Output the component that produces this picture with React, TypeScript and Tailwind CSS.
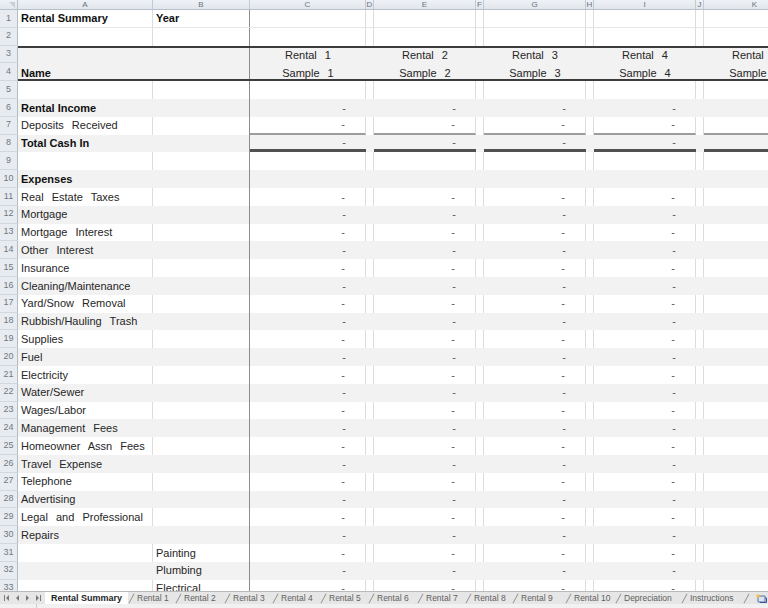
import React from 'react';

const WIDTHS = [
  'w-[135px]',
  'w-[97px]',
  'w-[116px]',
  'w-[8px]',
  'w-[102px]',
  'w-[8px]',
  'w-[102px]',
  'w-[8px]',
  'w-[102px]',
  'w-[8px]',
  'w-[102px]',
];
const LETTERS = ['A', 'B', 'C', 'D', 'E', 'F', 'G', 'H', 'I', 'J', 'K'];
const MONEY = [2, 4, 6, 8, 10];

type Label = { a?: string; b?: string; bold?: boolean };

const LABELS: Record<number, Label> = {
  1: { a: 'Rental Summary', b: 'Year', bold: true },
  4: { a: 'Name', bold: true },
  6: { a: 'Rental Income', bold: true },
  7: { a: 'Deposits Received' },
  8: { a: 'Total Cash In', bold: true },
  10: { a: 'Expenses', bold: true },
  11: { a: 'Real Estate Taxes' },
  12: { a: 'Mortgage' },
  13: { a: 'Mortgage Interest' },
  14: { a: 'Other Interest' },
  15: { a: 'Insurance' },
  16: { a: 'Cleaning/Maintenance' },
  17: { a: 'Yard/Snow Removal' },
  18: { a: 'Rubbish/Hauling Trash' },
  19: { a: 'Supplies' },
  20: { a: 'Fuel' },
  21: { a: 'Electricity' },
  22: { a: 'Water/Sewer' },
  23: { a: 'Wages/Labor' },
  24: { a: 'Management Fees' },
  25: { a: 'Homeowner Assn Fees' },
  26: { a: 'Travel Expense' },
  27: { a: 'Telephone' },
  28: { a: 'Advertising' },
  29: { a: 'Legal and Professional' },
  30: { a: 'Repairs' },
  31: { b: 'Painting' },
  32: { b: 'Plumbing' },
  33: { b: 'Electrical' },
};

const TABS = [
  { name: 'Rental 1', w: 'w-[47px]' },
  { name: 'Rental 2', w: 'w-[49px]' },
  { name: 'Rental 3', w: 'w-[48px]' },
  { name: 'Rental 4', w: 'w-[48px]' },
  { name: 'Rental 5', w: 'w-[48px]' },
  { name: 'Rental 6', w: 'w-[49px]' },
  { name: 'Rental 7', w: 'w-[48px]' },
  { name: 'Rental 8', w: 'w-[47px]' },
  { name: 'Rental 9', w: 'w-[53px]' },
  { name: 'Rental 10', w: 'w-[50px]' },
  { name: 'Depreciation', w: 'w-[66px]' },
  { name: 'Instructions', w: 'w-[62px]' },
];

const isGray = (n: number) => n === 3 || n === 4 || (n >= 6 && n % 2 === 0);
const hasDash = (n: number) => n === 6 || n === 7 || n === 8 || n >= 11;

function Cell({ n, i }: { n: number; i: number }) {
  const gray = isGray(n);
  const label = LABELS[n];
  const money = MONEY.includes(i);

  let border = '';
  if (i === 1) border = 'border-r border-r-[#8c8c8c]';
  else if (!gray) border = 'border-r border-r-[#dcdcdc]';

  let under = '';
  if (money && n === 7) under = 'border-b-2 border-b-[#9c9c9c]';
  if (money && n === 8) under = 'border-b-[3px] border-b-[#505050]';

  let content: React.ReactNode = null;
  let align = 'justify-start pl-[3px]';

  if (i === 0 && label?.a) {
    content = (
      <span className={label.bold ? 'font-bold text-[#111]' : 'text-[#262626] [word-spacing:5px]'}>
        {label.a}
      </span>
    );
  }
  if (i === 1 && label?.b) {
    content = (
      <span className={label.bold ? 'font-bold text-[#111]' : 'text-[#262626] [word-spacing:5px]'}>
        {label.b}
      </span>
    );
  }
  if (money && (n === 3 || n === 4)) {
    const k = MONEY.indexOf(i) + 1;
    align = 'justify-center';
    content = (
      <span className="whitespace-nowrap text-[#262626] [word-spacing:5px]">
        {n === 3 ? `Rental ${k}` : `Sample ${k}`}
      </span>
    );
  }
  if (money && hasDash(n) && i !== 10) {
    align = 'justify-end pr-[20px]';
    content = <span className="text-[#555]">-</span>;
  }

  const shift = n === 4 ? 'pt-[3px]' : '';

  return (
    <div className={`flex shrink-0 items-center overflow-visible ${WIDTHS[i]} ${border} ${under} ${align} ${shift}`}>
      {content}
    </div>
  );
}

function SheetRow({ n }: { n: number }) {
  const gray = isGray(n);
  let edge = '';
  if (n === 3) edge = 'border-t-2 border-t-[#3c3c3c]';
  if (n === 4) edge = 'border-b-2 border-b-[#3c3c3c]';
  if (n === 1) edge = 'border-b border-b-[#e6e6e6]';

  return (
    <div className="flex h-[17.8px] shrink-0">
      <div className="flex w-[18px] shrink-0 items-center justify-center border-b border-r border-b-[#d2d8df] border-r-[#b4bcc6] bg-[#e8ecf1] text-[9px] text-[#6f7782]">
        {n}
      </div>
      <div className={`flex flex-1 ${gray ? 'bg-[#f2f2f2]' : 'bg-white'} ${edge}`}>
        {WIDTHS.map((_, i) => (
          <Cell key={i} n={n} i={i} />
        ))}
      </div>
    </div>
  );
}

function Slash() {
  return <div className="h-[11px] w-px shrink-0 rotate-[28deg] bg-[#9a9a9a]" />;
}

export default function App() {
  const rows = Array.from({ length: 33 }, (_, k) => k + 1);

  return (
    <div className="flex h-[608px] w-[768px] flex-col overflow-hidden bg-white font-['Liberation_Sans',Arial,sans-serif] text-[11px]">
      <div className="flex h-[591px] shrink-0 flex-col overflow-hidden">
        {/* column letters */}
        <div className="flex h-[10px] shrink-0 border-b border-[#b8c0ca] bg-gradient-to-b from-[#eef1f5] to-[#e2e7ed] text-[8px] leading-none text-[#6a7280]">
          <div className="relative w-[18px] shrink-0 border-r border-[#b8c0ca]">
            <div className="absolute bottom-[1px] right-[2px] h-0 w-0 border-l-[6px] border-t-[6px] border-l-transparent border-t-[#c9cfd7]" />
          </div>
          {WIDTHS.map((w, i) => (
            <div
              key={i}
              className={`flex shrink-0 items-center justify-center border-r border-[#c4cad2] ${w}`}
            >
              {LETTERS[i]}
            </div>
          ))}
        </div>
        {rows.map((n) => (
          <SheetRow key={n} n={n} />
        ))}
      </div>

      {/* sheet tabs */}
      <div className="flex h-[13px] shrink-0 items-center border-t border-[#b9b9b9] bg-[#e6e6e6] text-[8.5px] leading-none text-[#5e5e5e]">
        <div className="flex w-[45px] shrink-0 items-center gap-[5px] pl-[4px]">
          <svg width="6" height="6" viewBox="0 0 6 6">
            <rect x="0" y="0" width="1" height="6" fill="#7a7a7a" />
            <path d="M5 0 L2 3 L5 6 Z" fill="#7a7a7a" />
          </svg>
          <svg width="5" height="6" viewBox="0 0 5 6">
            <path d="M4 0 L1 3 L4 6 Z" fill="#7a7a7a" />
          </svg>
          <svg width="5" height="6" viewBox="0 0 5 6">
            <path d="M1 0 L4 3 L1 6 Z" fill="#7a7a7a" />
          </svg>
          <svg width="6" height="6" viewBox="0 0 6 6">
            <path d="M1 0 L4 3 L1 6 Z" fill="#7a7a7a" />
            <rect x="5" y="0" width="1" height="6" fill="#7a7a7a" />
          </svg>
        </div>
        <div className="flex w-[92px] shrink-0 items-center self-stretch">
          <div className="flex h-full w-[83px] items-center bg-white pl-[6px] text-[9px] font-bold text-[#1e1e1e]">
            Rental Summary
          </div>
          <div className="ml-[3px]">
            <Slash />
          </div>
        </div>
        {TABS.map((t) => (
          <div key={t.name} className={`flex shrink-0 items-center justify-between pr-[5px] ${t.w}`}>
            <span className="whitespace-nowrap">{t.name}</span>
            <Slash />
          </div>
        ))}
        <div className="flex shrink-0 items-center pl-[2px]">
          <svg width="13" height="10" viewBox="0 0 13 10">
            <path d="M4 3 L11 3 L11 9 L4 9 Z" fill="#dde5f2" stroke="#5a6fa0" strokeWidth="1" />
            <path d="M11 5 L12.5 5 L12.5 9.5 L6 9.5" fill="none" stroke="#3d55a0" strokeWidth="1" />
            <path d="M4 0.5 L5 2.3 L7 2.8 L5 3.4 L4 5.5 L3 3.4 L1 2.8 L3 2.3 Z" fill="#f2c13a" />
          </svg>
        </div>
      </div>
      <div className="flex h-[4px] shrink-0 bg-[#f1f1f1]">
        <div className="w-[37px] border-r border-[#cfcfcf]" />
      </div>
    </div>
  );
}
